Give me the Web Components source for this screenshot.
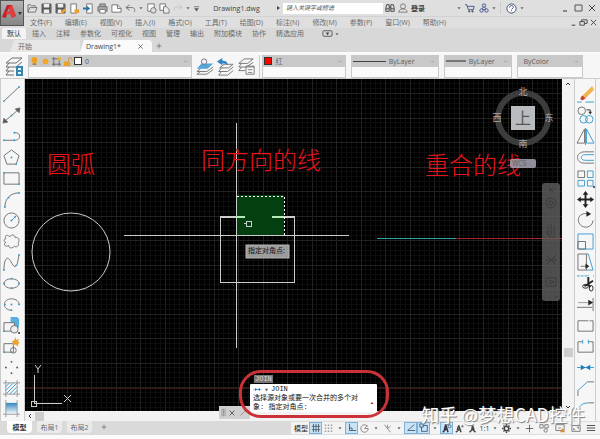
<!DOCTYPE html>
<html lang="zh">
<head>
<meta charset="utf-8">
<title>Drawing1.dwg</title>
<style>
html,body{margin:0;height:100%;overflow:hidden}
body{font:7px/9px "Open Sans","Noto Sans CJK SC",sans-serif;color:#6a6a6a;background:#f6f6f6}
</style>
</head>
<body>
<cad-app></cad-app>
<script>
const B='#3b9ccc', G='#707070';
const dot=(x,y,c=B)=>`<circle cx="${x}" cy="${y}" r="1" fill="${c}" stroke="none"/>`;
/* Icons: [size of the square view box, markup] */
const ICONS={
  line:[18,`<path d="M1 16 17 1"/>${dot(1,16)}${dot(17,1)}`],
  xline:[18,`<path d="M2 15 16 3"/><path d="M0 17 1 12 5 16ZM18 1 17 6 13 2Z" fill="#555"/>${dot(9,9)}`],
  pline:[18,`<path d="M1 13H12C20 13 19 4 12 5"/>${dot(1,13)}${dot(12,13)}${dot(12,5)}`],
  poly:[18,`<path d="M9 1 17 7 14 16H4L1 7Z"/>${dot(9,9)}${dot(14,16)}`],
  rect:[18,`<path d="M1 3H17V15H1Z"/>${dot(1,3)}${dot(17,15)}`],
  arc:[18,`<path d="M2 17C2 8 8 2 17 2"/>${dot(2,17)}${dot(6,7)}${dot(17,2)}`],
  circle:[18,`<circle cx="9" cy="9" r="8"/><path d="M9 9 13 5" stroke="${B}"/>${dot(9,9)}${dot(13,5)}`],
  cloud:[18,`<path d="M3 6C1 3 5 1 7 4 9 1 13 2 13 5 17 4 18 8 16 10 18 13 14 16 12 14 9 17 6 16 6 13 2 16 0 11 3 10 0 9 1 6 3 6Z"/>`],
  spline:[18,`<path d="M1 17C1 6 4 2 7 6S12 17 15 11L17 1"/>${dot(1,17)}${dot(17,1)}${dot(14,12)}`],
  ellipse:[18,`<ellipse cx="9" cy="9" rx="8" ry="5"/>${dot(1,9)}${dot(17,9)}${dot(9,4)}${dot(9,14)}`],
  earc:[18,`<path d="M9 15C-1 15-1 3 9 3 14 3 17 6 17 9"/>${dot(9,9)}${dot(17,9)}${dot(9,15)}${dot(2,9)}`],
  insert:[18,`<path d="M8 0H15L17 2V11H8Z" fill="#5aaede" stroke="none"/><path d="M1 6H12V15H1Z" fill="#f5f5f5"/><circle cx="12" cy="13" r="4" fill="#eee"/>${dot(1,15)}${dot(17,17,'#222')}`],
  block:[18,`<path d="M1 6H11V15H1Z"/><circle cx="11" cy="13" r="3"/><path d="M13-1 14 2 17 1 16 4 18 5 16 6 16 9 13 7 10 8 11 5 9 4 12 2Z" fill="#eba22c" stroke="none"/>${dot(1,15)}`],
  points:[18,`${dot(9,3,'#555')}${dot(3,9,'#555')}${dot(15,9,'#555')}${dot(9,15,'#555')}`],
  hatch:[18,`<path d="M3 7 7 3M3 11 11 3M3 15 15 3M7 15 15 7M11 15 15 11" stroke="${B}"/><path d="M3 0V18M15 0V18M0 3H18M0 15H18" stroke="#999"/>`],
  gradient:[18,`<defs><linearGradient id="g" x2="0" y2="1"><stop stop-color="#2f86c0"/><stop offset="1" stop-color="#fff"/></linearGradient></defs><path d="M3 2H15V14H3Z" fill="url(#g)" stroke="none"/><path d="M3-1V17M15-1V17M0 14H18" stroke="#999"/>`],
  erase:[18,`<path d="M16 0 18 4 9 13 6 10Z" fill="#f0b64c" stroke="none"/><path d="M6 10 9 13 6 15C3 15 3 12 6 10Z" fill="#cf3a2c" stroke="none"/><path d="M0 17H5M9 17H18" stroke="${B}"/>`],
  copy:[18,`<circle cx="5" cy="4" r="4"/><g stroke="${B}"><circle cx="7" cy="13" r="4"/><circle cx="13" cy="13" r="4"/></g><path d="M10 3H14V6" stroke="#333"/><path d="M12 5H16L14 8Z" fill="#333" stroke="none"/>`],
  mirror:[18,`<path d="M8 1V16H0Z"/><path d="M10 1V16H18Z" stroke="${B}"/><path d="M9 0V18" stroke="#888"/>`],
  offset:[18,`<path d="M18 3H8C-2 3-2 15 8 15H18" /><path d="M18 6H9C3 6 3 12 9 12H18" stroke="${B}"/>`],
  array:[18,`<path d="M1 1H8V8H1Z"/><path d="M11 1H17V8H11ZM1 11H8V17H1ZM11 11H17V17H11Z" stroke="${B}"/>${dot(18,18,'#222')}`],
  move:[18,`<path d="M9 2V16M2 9H16" stroke="#222" stroke-width="2"/><path d="M9 0 12 4H6ZM9 18 12 14H6ZM0 9 4 6V12ZM18 9 14 6V12Z" fill="#222" stroke="none"/>`],
  rotate:[18,`<path d="M11 2C3 0-1 8 3 13S16 17 17 9"/><path d="M10-1 15 2 10 5Z" fill="#222" stroke="none"/>`],
  scale:[18,`<path d="M1 1H17V17H1Z" stroke="${B}"/><path d="M1 9H9V17H1Z"/>`],
  stretch:[18,`<path d="M10 0H12L17 17H10" stroke="${B}"/><path d="M1 0H10V17H1ZM4 13H11"/><path d="M9 10 13 13 9 16Z" fill="#222" stroke="none"/>`],
  trim:[18,`<path d="M0 1H11" stroke="${B}" stroke-dasharray="3 1"/><path d="M12 0V1M17 1H18" stroke="${B}"/><path d="M12 2V10L14 13M17 6 8 12" stroke="#222" stroke-width="2"/><ellipse cx="15" cy="14" rx="2" ry="3" stroke="#222" stroke-width="1"/><ellipse cx="9" cy="12" rx="3" ry="2" stroke="#222"/>`],
  extend:[18,`<path d="M17 2V16M0 12H16" /><path d="M1 7H14" stroke="#999"/><path d="M12 4 17 7 12 10Z" fill="#222" stroke="none"/>`],
  breakpt:[18,`<path d="M1 4H12M15 4H17V15H1V4"/>${dot(14,4,'#aaa')}`],
  brk:[18,`<path d="M6 4H1V15H17V4H12"/><path d="M6 2V6M12 2V6" stroke="${B}"/>`],
  join:[18,`<path d="M0 9H18" stroke="${B}"/><path d="M4 6 9 9 4 12ZM14 6 9 9 14 12Z" fill="#1a7ec0" stroke="none"/>`],
  chamfer:[18,`<path d="M1 17V11M11 2H18"/><path d="M1 11 11 2" stroke="${B}"/>`],
  fillet:[18,`<path d="M1 17V12M12 2H18"/><path d="M1 12C1 6 5 2 12 2" stroke="${B}"/>`],
  layers:[20,`<path d="M8 1H18L12 6H2ZM5 6 2 10H12L18 5M5 10 2 14H10M5 14 2 18H10" fill="none"/><path d="M12 9H19V19H12Z" fill="#3d83b0" stroke="none"/><path d="M14 11H17V13H14ZM14 15H17V17H14Z" fill="#dff" stroke="none"/>`],
  layermake:[20,`<path d="M5 12 1 15H12L19 10M5 15 1 18H12L19 13"/><path d="M6 6H19L13 12H1Z" fill="#55a5d8" stroke="none"/><circle cx="9" cy="4" r="3" fill="#eef"/>`],
  layerprev:[20,`<path d="M9 7H19L14 11H4ZM6 11 3 15H13L19 10M6 15 3 19H13L19 14"/><path d="M1 4 7 0V3C12 3 13 5 13 8 11 6 10 6 7 6V8Z" fill="#2f86c0" stroke="none"/>`],
  layerstate:[20,`<path d="M8 1H18L12 6H2ZM5 6 2 10H10L18 5M5 10 2 14H9"/><path d="M10 9H19V18H10Z" fill="#fff"/><path d="M10 10H19M12 13H17M12 16H17"/>`],
  bulb:[10,`<path d="M5 0C1 0 1 4 3 6V9H7V6C9 4 9 0 5 0Z" fill="#f0a020" stroke="none"/><path d="M3 8H7"/>`],
  sun:[10,`<circle cx="5" cy="5" r="3" fill="#f3a62b" stroke="none"/><path d="M5 1V9M1 5H9M2 2 8 8M8 2 2 8" stroke="#f3a62b"/>`],
  freeze:[10,`<path d="M2 0V10M8 0V10M0 2H10M0 8H10" stroke="#666"/><circle cx="8" cy="2" r="2" fill="#f0b030" stroke="none"/>`],
  lock:[10,`<path d="M1 5H8V10H1Z" fill="#eba22c" stroke="none"/><path d="M6 5V3C6 0 10 0 10 3V4" stroke="#d08a20"/>`],
  open:[12,`<path d="M1 10V2H4L5 3H9V5M1 10 3 5H11L9 10Z"/>`],
  save:[12,`<path d="M1 1H11V11H1Z" fill="#555"/><path d="M3 1H9V5H3ZM3 7H9V11H3Z" fill="#eee" stroke="none"/>`],
  saveas:[12,`<path d="M1 1H11V11H1Z" fill="#555"/><path d="M3 1H9V5H3ZM3 7H7V11H3Z" fill="#eee" stroke="none"/><path d="M6 10 10 6 12 8 8 12Z" fill="#eba22c" stroke="none"/>`],
  page:[12,`<path d="M2 1H8V11H2Z" fill="#fff"/><path d="M6 7H11V11H6Z" fill="#eba22c" stroke="none"/>`],
  import:[12,`<path d="M4 1H10V11H4Z" fill="#fff"/><path d="M0 5H4V3L8 6 4 9V7H0Z" fill="#2878a8" stroke="none"/>`],
  print:[12,`<path d="M3 4V1H9V4M1 4H11V9H1Z" fill="#aaa"/><path d="M3 7H9V11H3Z" fill="#fff"/>`],
  sheet:[12,`<path d="M1 2H7L11 6V10H1Z" fill="#fff"/><path d="M7 2V6H11"/>`],
  undo:[12,`<path d="M5 2 1 5 5 8M1 5H8C11 5 11 9 10 10"/>`],
  redo:[12,`<path d="M7 2 11 5 7 8M11 5H4C1 5 1 9 2 10" stroke="#c4c4c4"/>`],
  plot:[12,`<path d="M2 1H9V9H2Z" fill="#fff"/><circle cx="8" cy="8" r="3" fill="#ddd"/>`],
  pages:[12,`<path d="M1 1H7V8H1Z" fill="#fff"/><path d="M5 4H8L11 7V11H5Z" fill="#eee"/>`],
  caret:[8,`<path d="M2 3H6L4 6Z" fill="#666" stroke="none"/>`],
  redcaret:[8,`<path d="M1 6H7L4 2Z" fill="#a22" stroke="none"/>`],
  more:[8,`<path d="M1 2H7M2 4H6L4 7Z" fill="#555"/>`],
  right:[8,`<path d="M3 2 6 4 3 6Z" fill="#444" stroke="none"/>`],
  find:[12,`<path d="M2 2H5V10H1V6ZM10 2H7V10H11V6ZM5 5H7" stroke="#333"/><path d="M1 7H5M7 7H11" stroke="#333"/>`],
  user:[12,`<circle cx="6" cy="4" r="3"/><path d="M1 11C1 8 4 7 6 7S11 8 11 11Z"/>`],
  cart:[12,`<path d="M0 2H2L4 8H10L11 4H3" stroke="#34447a"/><circle cx="5" cy="10" r="1" fill="#34447a"/><circle cx="9" cy="10" r="1" fill="#34447a"/>`],
  nodes:[12,`<g stroke="#34447a"><path d="M6 4 3 8H9Z"/><circle cx="6" cy="3" r="2" fill="#dde"/><circle cx="3" cy="9" r="2" fill="#dde"/><circle cx="9" cy="9" r="2" fill="#dde"/></g>`],
  help:[12,`<circle cx="6" cy="6" r="5" stroke="#34447a" fill="#fff"/><path d="M4 5C4 2 8 2 8 5L6 7M6 8V9" stroke="#34447a"/>`],
  min:[10,`<path d="M3 8H7" stroke="#333"/>`],
  max:[10,`<path d="M2 2H9V8H2Z" stroke="#555"/>`],
  restore:[10,`<path d="M1 4H6V8H1ZM3 4V2H9V6H6" stroke="#444"/>`],
  close:[10,`<path d="M2 2 8 8M8 2 2 8" stroke="#444"/>`],
  ribbon:[12,`<rect x="1" y="3" width="10" height="6" rx="1" stroke="#555"/><path d="M4 5H8L6 8Z" fill="#444" stroke="none"/>`],
  plus:[10,`<path d="M5 1V9M1 5H9" stroke="#555"/>`],
  grid:[12,`<path d="M3 1V11M6 1V11M9 1V11M1 4H11M1 8H11" stroke="#456"/>`],
  dots:[12,[2,6,10].map(y=>[2,6,10].map(x=>`<rect x="${x-1}" y="${y-1}" width="2" height="1" fill="#555" stroke="none"/>`).join('')).join('')],
  ortho:[12,`<path d="M3 1V9H11M3 6H6V9" stroke="#357"/>`],
  polar:[12,`<path d="M10 3A5 5 0 1 0 11 6H6L10 2"/>`],
  iso:[12,`<path d="M2 1 10 11M6 1V5M10 3 6 6"/>`],
  otrack:[12,`<path d="M10 2 2 9H11" stroke="#357"/>`],
  osnap:[12,`<path d="M3 3H10V10H3Z" stroke="#357"/><path d="M1 1H5V5H1Z" fill="#bfe0f4" stroke="#357"/>`],
  anno:[12,`<path d="M5 1 3 8M5 1 8 11M1 11 6 6" stroke="#334" stroke-width="2"/><circle cx="10" cy="3" r="2" stroke="#357"/>`],
  anno2:[12,`<path d="M5 2 3 8M5 2 8 11M1 11 6 7" stroke="#444" stroke-width="2"/><path d="M8 3H12M10 1V5"/>`],
  anno3:[12,`<path d="M6 2 5 8M6 2 8 8M2 11 6 7 10 11" stroke="#444" stroke-width="2"/>`],
  gear:[12,`<circle cx="6" cy="6" r="3" stroke="#444" stroke-width="2"/><path d="M6 0V2M6 10V12M0 6H2M10 6H12M2 2 3 3M9 9 10 10M10 2 9 3M2 10 3 9" stroke="#444" stroke-width="2"/>`],
  cross:[12,`<path d="M6 1V11M1 6H11" stroke="#444"/>`],
  shapes:[12,`<path d="M1 2H5V6H1ZM7 2H11V6H7Z"/><circle cx="8" cy="9" r="2"/>`],
  screen:[12,`<path d="M1 2H11V9H1ZM4 6H7"/><path d="M9 6 12 11H6Z" fill="#e08a30" stroke="none"/>`],
  full:[12,`<path d="M1 3H11V10H1ZM3 8V6M3 8H5M9 5V7M9 5H7"/>`],
  menu:[12,`<path d="M1 3H11M1 6H11M1 9H11" stroke="#333"/>`],
  wrench:[12,`<path d="M2 10 8 4M8 4 7 2 9 1M8 4 10 5 11 3" stroke="#888"/>`],
  grip:[12,`<path d="M4 1V11M6 1V11M8 1V11" stroke="#888"/>`],
  up:[8,`<path d="M2 5 4 3 6 5" stroke="#333"/>`],
  down:[8,`<path d="M2 3 4 5 6 3" stroke="#333"/>`],
  chev:[8,`<path d="M2 3 4 5 6 3" stroke="#888"/>`],
  left:[8,`<path d="M5 2 3 4 5 6" stroke="#333"/>`]
};
const svg=(n,s)=>`<svg width="${s||ICONS[n][0]}" height="${s||ICONS[n][0]}" viewBox="0 0 ${ICONS[n][0]} ${ICONS[n][0]}" fill="none" stroke="${G}" style="overflow:visible;flex:none;display:block" aria-hidden="true">${ICONS[n][1]}</svg>`;
const def=(tag,render)=>customElements.define(tag,class extends HTMLElement{
  connectedCallback(){ if(this.shadowRoot) return; this.attachShadow({mode:'open'}).innerHTML=render(this); }
});
const RESET=`*{box-sizing:border-box}button,select,input{font:inherit;color:inherit;border:0;margin:0;padding:0;background:none;border-radius:0;outline:0}button{display:flex;align-items:center;justify-content:center}a{color:inherit;text-decoration:none}`;

/* cad-tool: an icon button; w and h give its box */
def('cad-tool',e=>{
  const w=e.getAttribute('w')||13,h=e.getAttribute('h')||13,on=e.hasAttribute('on');
  return `<style>${RESET}:host{display:block;flex:none}button{width:${w}px;height:${h}px;${on?'background:#c9e3f5;border:1px solid #7fb2d6;':''}}</style>
  <button aria-label="${e.getAttribute('icon')}">${svg(e.getAttribute('icon'),e.getAttribute('s'))}</button>`;
});
const T=(icon,w,h,s,x='')=>`<cad-tool icon="${icon}" w="${w}" h="${h}" ${s?`s="${s}"`:''} ${x}></cad-tool>`;

def('cad-titlebar',()=>`<style>${RESET}
:host{display:flex;height:28px;background:#dfdfdf}
.logo{width:24px;height:26px;flex:none;background:linear-gradient(#b4b4b4,#858585);border:1px solid #555}
.rows{flex:1;min-width:0}
.r{display:flex;align-items:center;height:16px;padding:0 2px 0 1px}
.r2{height:12px;padding-left:6px;border-top:1px solid #d2d2d2}
.title{flex:1;text-align:center;color:#444}
label{display:block;width:100px;height:11px}
input{width:100%;height:11px;background:#fff;padding:0 3px;font-size:6px;font-style:italic;display:block}
input::placeholder{color:#555;opacity:1}
b{font-weight:700;color:#444;margin:0 30px 0 2px}
nav{display:flex;gap:13px;flex:1}
.gap{width:5px;height:12px;border-left:1px solid #ccc;margin-left:3px}
.win{display:flex;margin-left:32px}
</style>
<button class="logo" aria-label="A"><svg width="22" height="24" viewBox="0 0 22 24"><path d="M1 16 6 4H11L15 15 11 17 9 12 6 13 5 17Z" fill="#c32127"/><path d="M8 6 11 4 15 15 11 17ZM5 11 9 10 10 13 5 14Z" fill="#e0403e"/><path d="M8 7 9 10 6 11Z" fill="#999"/><path d="M17 11H21L19 14Z" fill="#333"/></svg></button>
<div class="rows"><div class="r">
${['open','save','saveas','page','import','print','sheet','undo'].map(n=>T(n,14,14,11)).join('')}${T('caret',8,14,6)}${T('plot',13,14,11)}${T('pages',13,14,11)}${T('redo',13,14,10)}${T('caret',8,14,6)}${T('more',8,14,7)}
<span class="title">Drawing1.dwg</span>${T('right',10,14,8)}
<label><input aria-label="搜索" placeholder="键入关键字或短语"></label>
${T('find',13,14,10)}${T('user',13,14,10)}<b>登录</b>${T('caret',8,14,6)}${T('cart',14,14,10)}${T('nodes',14,14,10)}${T('caret',6,14,6)}<span class="gap"></span>${T('help',13,14,11)}${T('caret',8,14,6)}
<span class="win">${T('min',13,14,10)}${T('max',14,14,10)}${T('close',13,14,10)}</span></div>
<div class="r r2"><nav>${['文件(F)','编辑(E)','视图(V)','插入(I)','格式(O)','工具(T)','绘图(D)','标注(N)','修改(M)','参数(P)','窗口(W)','帮助(H)'].map(t=>`<a href="#">${t}</a>`).join('')}</nav>
${T('min',10,10,9)}${T('restore',10,10,9)}${T('close',10,10,9)}</div></div>`);

def('cad-ribbon',()=>`<style>${RESET}
:host{display:flex;height:11px;background:#d8d8d8;padding-left:2px;align-items:center}
button{height:11px;padding:0 5px}
.on{background:#f3f3f3;color:#333;margin-right:1px;border-radius:2px 2px 0 0}
cad-tool{margin-left:12px}cad-tool+cad-tool{margin-left:0}
</style>${['默认','插入','注释','参数化','可视化','视图','管理','输出','附加模块','协作','精选应用'].map((t,i)=>`<button class="${i?'':'on'}">${t}</button>`).join('')}${T('ribbon',12,11,11)}${T('caret',8,11,6)}`);

def('cad-doctabs',()=>`<style>${RESET}
:host{display:flex;height:15px;background:#d8d8d8;border-bottom:2px solid #fafafa;padding:1px 0 0 10px}
div{display:flex;height:12px;align-items:center;background:#e6e6e6;width:70px;padding-left:8px;clip-path:polygon(4px 0,100% 0,100% 100%,0 100%)}
.on{background:#fafafa;width:72px;padding:0 7px 0 6px;color:#444;justify-content:space-between;border-radius:2px 4px 0 0}
</style><div><button>开始</button></div><div class="on"><button>Drawing1*</button>${T('close',10,10,7)}</div>${T('plus',13,12,6)}`);

/* cad-combo: a drop-down with a slot for swatches before its value */
def('cad-combo',e=>`<style>${RESET}
:host{display:block;min-width:0;background:#fafafa;border:1px solid #c8c8c8;border-width:0 1px 1px;height:23px}
label{display:flex;align-items:center;gap:2px;height:12px;padding:0 3px 0 1px;background:#c8c8c8;color:#606060}
select{appearance:none;flex:1;min-width:0;height:12px;padding-left:1px}
</style><label><slot></slot><select aria-label="${e.getAttribute('label')}"><option>${e.getAttribute('value')}</option></select>${svg('chev',5)}</label>`);

def('cad-properties',()=>`<style>${RESET}
:host{display:flex;height:25px;background:#f6f6f6;border-bottom:1px solid #ccc;padding:1px 17px 0 0}
.l{flex:166 1 0}.c{flex:83 1 0}.t{flex:88 1 0;margin-left:5px}.w{flex:68 1 0;margin-left:5px}.p{flex:65 1 0;margin-left:5px}
.three{display:flex;margin:0 2px 0 3px;border-right:1px solid #ccc;padding-right:2px}
.sw{width:8px;height:8px;border:1px solid #333;background:#fff;flex:none}.red{background:#f00}
.ln{width:33px;border-top:1px solid #444}.lw{width:20px;border-top:2px solid #777}.sp{width:1px}
</style>${T('layers',28,23,20)}
<cad-combo class="l" label="图层" value="0">${svg('bulb',9)}${svg('sun',9)}${svg('freeze',9)}${svg('lock',9)}<span class="sw"></span></cad-combo>
<span class="three">${T('layermake',20,23,18)}${T('layerprev',20,23,18)}${T('layerstate',22,23,18)}</span>
<cad-combo class="c" label="颜色" value="红"><span class="sw red"></span></cad-combo>
<cad-combo class="t" label="线型" value="ByLayer"><span class="ln"></span></cad-combo>
<cad-combo class="w" label="线宽" value="ByLayer"><span class="lw"></span></cad-combo>
<cad-combo class="p" label="打印样式" value="ByColor"><span class="sp"></span></cad-combo>`);

def('cad-palette',e=>`<style>${RESET}
:host{display:flex;flex-direction:column;align-items:flex-start;background:#f6f6f6;border:1px solid #ccc;border-width:0 1px;padding-top:5px;overflow:hidden;min-height:0}
</style>${e.getAttribute('tools').split(' ').map(n=>T(n,20,21,17)).join('')}`);

def('cad-scroll',e=>{const v=e.hasAttribute('vertical');return `<style>${RESET}
:host{display:flex;flex-direction:${v?'column':'row'};justify-content:space-between;background:#f2f2f2;align-items:center}
i{display:block;background:#cdcdcd;width:9px;height:9px}
${v?'i{margin-top:auto;margin-bottom:46px}':'i{margin-right:auto}'}
</style>${v?T('up',10,10,8)+'<i></i>'+T('down',10,8,8):T('left',10,10,8)+'<i></i>'}`});

def('cad-viewport',()=>{
  const X0=25,Y0=79,W=537,H=332,step=49/10;
  let minor='',major='';
  for(let k=-4;42+k*step<X0+W;k++){const x=Math.round(42+k*step);if(x>=X0){const d=`M${x} ${Y0}h1v${H}h-1z`;k%5?minor+=d:major+=d}}
  for(let k=-2;93+k*step<Y0+H;k++){const y=Math.round(93+k*step);if(y>=Y0){const d=`M${X0} ${y}h${W}v1h-${W}z`;k%5?minor+=d:major+=d}}
  return `<style>${RESET}
:host{display:block;position:relative;background:#000;overflow:hidden;min-width:0;min-height:0}
svg{position:absolute;inset:0;width:100%;height:100%}
text{font-family:"Noto Sans CJK SC",sans-serif}
.big{font-size:24px;font-weight:300;fill:#e8141c}
.dir{font-size:9px;fill:#aaa;text-anchor:middle}
</style><svg viewBox="25 79 537 332" preserveAspectRatio="xMinYMin slice">
<path d="${minor}" fill="#0e0e0e"/><path d="${major}" fill="#222"/>
<path d="M25 388h537v1H25z" fill="#3a1310"/>
<rect x="236" y="195" width="48" height="40" fill="#043f10"/>
<path d="M236 123h1v225h-1zM124 235h225v1H124z" fill="#ccc"/>
<path d="M220 216h1v66h-1zM220 282h75v1h-75zM294 216h1v66h-1zM220 216h16v2h-16zM284 216h11v2h-11z" fill="#ccc"/>
<path d="M236 216h9v2h-9zM272 216h12v2h-12z" fill="#b4e8b4"/>
<g fill="none" stroke="#ccc" shape-rendering="crispEdges">
<path d="M237 196H284V235" stroke="#fff" stroke-dasharray="2 2"/>
<rect x="246" y="221" width="5" height="5"/><path d="M244 223H247" />
<path d="M34 375V403H62M31 401H36V406H31Z"/></g>
<g fill="none" stroke="#ccc"><circle cx="71" cy="252" r="39"/><path d="M35 365 38 369 41 365M38 369V373M64 395 71 402M71 395 64 402"/></g>
<path d="M377 238h79v1h-79z" fill="#26a5a5"/><path d="M456 238h106v1H456z" fill="#a82424"/>
<text class="big" x="47" y="173">圆弧</text><text class="big" x="201" y="169">同方向的线</text><text class="big" x="425" y="174">重合的线</text>
<circle cx="523" cy="118" r="25" fill="none" stroke="#3d3d3d" stroke-width="6"/>
<rect x="511" y="106" width="24" height="24" fill="#b9bcbe"/><text x="523" y="124" font-size="16" text-anchor="middle" fill="#555">上</text>
<text class="dir" x="523" y="95">北</text><text class="dir" x="523" y="147">南</text><text class="dir" x="497" y="121">西</text><text class="dir" x="549" y="121">东</text>
<rect x="510" y="159" width="26" height="9" rx="2" fill="#a4a4b6" opacity=".85"/><text x="512" y="166" font-size="7" fill="#666">WCS</text>
<rect x="542" y="183" width="18" height="118" rx="3" fill="#666" opacity=".75"/>
<g stroke="#3c3c3c" fill="none"><circle cx="551" cy="203" r="5"/><circle cx="551" cy="203" r="2"/><path d="M549 188 553 192M553 188 549 192M548 226V235M551 224V235M554 226V235M546 231 550 237H555M546 255 556 265M556 255 546 265M545 260H557M546 278H556V286H546ZM549 280 554 282 549 284M555 297H558"/></g>
<rect x="246" y="245" width="43" height="13" fill="#9c9c9c" stroke="#b5b5b5"/><text x="248" y="253" font-size="7" fill="#111">指定对角点:</text>
</svg>`});

/* cad-command: floating command line, lies over the viewport */
def('cad-command',()=>`<style>${RESET}
:host{display:flex;align-items:flex-end;font:7px/9px "Liberation Mono","Noto Sans CJK SC",monospace;color:#111}
.bar{display:flex;background:#d0d0d0;height:13px;margin-bottom:-7px}
.box{position:relative;background:#fff;width:127px;height:28px;padding:1px 8px 0 3px;border-radius:1px}
.tag{position:absolute;left:4px;top:-9px;background:#777;color:#ddd;line-height:8px;padding:0 1px}
.h{display:flex;gap:1px;align-items:center;height:9px}
p{margin:0;white-space:nowrap}
.a{position:absolute;right:3px;bottom:7px}
</style><span class="bar">${T('grip',8,13,9)}${T('close',10,13,8)}${T('wrench',13,13,9)}</span>
<div class="box"><span class="tag">JOIN</span><div class="h">${svg('join',9)}${svg('caret',7)}JOIN</div><p>选择源对象或要一次合并的多个对</p><p>象: 指定对角点:</p><span class="a">${svg('redcaret',4)}</span></div>`);

def('cad-status',()=>`<style>${RESET}
:host{display:flex;height:14px;background:#dadada;justify-content:space-between;align-items:stretch}
nav,div{display:flex;align-items:center}nav{padding-left:7px;align-items:flex-start}
nav button{height:12px;width:25px;margin-right:5px;background:#eaeaea;border-radius:0 0 4px 4px}
nav .on{background:#fff;font-weight:700;color:#333}nav cad-tool{margin-left:-1px}
div{background:#f3f3f3;padding:0 3px 0 2px;border:1px solid #ddd;border-width:1px 0}
.m{width:16px;color:#222}.s{width:11px;color:#333}
</style><nav><button class="on">模型</button><button>布局1</button><button>布局2</button>${T('plus',16,12,6)}</nav>
<div><button class="m">模型</button>${T('grid',13,12,10,'on')}${T('dots',13,12,9)}${T('caret',10,12,6)}${T('ortho',13,12,10,'on')}${T('polar',13,12,9)}${T('caret',10,12,6)}${T('iso',13,12,9)}${T('caret',10,12,6)}${T('otrack',13,12,10,'on')}${T('osnap',13,12,10,'on')}${T('caret',10,12,6)}${T('anno',13,12,9,'on')}${T('anno2',13,12,9)}${T('anno3',13,12,9)}<button class="s">1:1</button>${T('caret',10,12,6)}${T('gear',13,12,9)}${T('caret',10,12,6)}${T('cross',13,12,9)}${T('shapes',16,12,10)}${T('screen',16,12,10)}${T('full',16,12,10)}${T('menu',13,12,10)}</div>`);

def('cad-app',()=>`<style>${RESET}
:host{display:flex;flex-direction:column;height:100vh;position:relative;overflow:hidden}
main{flex:1;min-height:0;display:grid;grid-template:minmax(0,1fr) 10px/25px minmax(0,1fr) 12px 22px 4px}
.lp{grid-area:1/1/3/2}.vp{grid-area:1/2}.hs{grid-area:2/2}.vs{grid-area:1/3}.rp{grid-area:1/4/3/5}
footer{background:#fbfbfb;height:4px}
cad-command{position:absolute;left:219px;bottom:27px}
.ring{position:absolute;left:239px;bottom:21px;width:150px;height:48px;border:3px solid #cb3136;border-radius:22px;pointer-events:none}
.mark{position:absolute;right:15px;bottom:14px;font:18px/22px "Noto Sans CJK SC",sans-serif;color:#fff;text-shadow:1px 1px 1px #777;white-space:nowrap}
</style>
<cad-titlebar></cad-titlebar><cad-ribbon></cad-ribbon><cad-doctabs></cad-doctabs><cad-properties></cad-properties>
<main><cad-palette class="lp" tools="line xline pline poly rect arc circle cloud spline ellipse earc insert block points hatch gradient"></cad-palette>
<cad-viewport class="vp"></cad-viewport><cad-scroll class="vs" vertical></cad-scroll><cad-scroll class="hs"></cad-scroll>
<cad-palette class="rp" tools="erase copy mirror offset array move rotate scale stretch trim extend breakpt brk join chamfer fillet"></cad-palette></main>
<cad-status></cad-status><footer></footer>
<cad-command></cad-command><span class="ring"></span><span class="mark">知乎 @梦想CAD控件</span>`);
</script>
</body>
</html>
